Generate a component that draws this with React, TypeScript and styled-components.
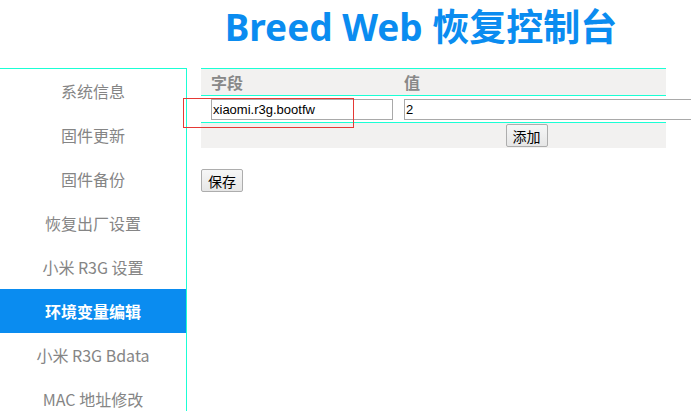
import { createGlobalStyle, styled } from "styled-components";

const GlobalStyle = createGlobalStyle`
  html, body {
    margin: 0;
    padding: 0;
    background: #fff;
  }
  body {
    font-family: "Noto Sans", "Noto Sans CJK SC", sans-serif;
  }
`;

const Page = styled.div`
  width: 691px;
  height: 411px;
  overflow: hidden;
  position: relative;
`;

const Header = styled.header`
  height: 68px;
  display: flex;
  justify-content: center;
  padding-left: 151px;
`;

const Title = styled.h1`
  margin: 0;
  padding-top: 4px;
  font-size: 37px;
  line-height: 46px;
  font-weight: 700;
  color: #0a8cf0;
  white-space: nowrap;
  font-family: "Noto Sans", "Noto Sans CJK SC", sans-serif;
`;

const Body = styled.div`
  display: flex;
  align-items: flex-start;
  gap: 14px;
`;

const Sidebar = styled.nav`
  width: 186px;
  flex-shrink: 0;
  border-top: 1px solid #1affd5;
  border-right: 1px solid #1affd5;
  height: 360px;
`;

const NavItem = styled.div<{ $active?: boolean }>`
  height: 44px;
  display: flex;
  align-items: center;
  justify-content: center;
  font-size: 16px;
  white-space: nowrap;
  font-family: "Noto Sans CJK SC", sans-serif;
  color: ${(p) => (p.$active ? "#fff" : "#858585")};
  font-weight: ${(p) => (p.$active ? 700 : 400)};
  background: ${(p) => (p.$active ? "#0a8cf0" : "transparent")};
`;

const Main = styled.main`
  width: 465px;
  flex-shrink: 0;
`;

const Table = styled.div`
  border-top: 1px solid #1affd5;
  background: #f2f1f0;
`;

const Row = styled.div<{ $plain?: boolean }>`
  display: grid;
  grid-template-columns: 193px 1fr;
  align-items: center;
  height: 26px;
  border-bottom: 1px solid #1affd5;
  background: ${(p) => (p.$plain ? "#fff" : "transparent")};
`;

const HeadCell = styled.div`
  padding-left: 10px;
  font-size: 16px;
  font-weight: 700;
  color: #888;
  font-family: "Noto Sans CJK SC", sans-serif;
`;

const Cell = styled.div<{ $center?: boolean }>`
  display: flex;
  justify-content: ${(p) => (p.$center ? "center" : "flex-start")};
  padding-left: ${(p) => (p.$center ? 0 : 10)}px;
`;

const ButtonRow = styled.div`
  display: grid;
  grid-template-columns: 186px 1fr;
  height: 25px;
  align-items: center;
`;

const Input = styled.input<{ $w: number }>`
  box-sizing: border-box;
  width: ${(p) => p.$w}px;
  height: 21px;
  margin: 0;
  border: 1px solid #a9a9a9;
  padding: 0 1px;
  font-size: 13px;
  font-family: "Liberation Sans", Arial, sans-serif;
  color: #000;
  background: #fff;
  outline: none;
`;

const Button = styled.button`
  box-sizing: border-box;
  width: 42px;
  height: 23px;
  padding: 0;
  border: 1px solid #adadad;
  border-radius: 2px;
  background: linear-gradient(#f6f6f6, #e6e6e6);
  font-size: 14px;
  color: #000;
  font-family: "Noto Sans CJK SC", sans-serif;
`;

const SaveArea = styled.div`
  padding-top: 21px;
`;

const Annotation = styled.div`
  position: absolute;
  left: 183px;
  top: 98px;
  width: 169px;
  height: 28px;
  border: 1px solid #e53935;
  pointer-events: none;
`;

const navItems = [
  "系统信息",
  "固件更新",
  "固件备份",
  "恢复出厂设置",
  "小米 R3G 设置",
  "环境变量编辑",
  "小米 R3G Bdata",
  "MAC 地址修改",
];

export default function App() {
  return (
    <Page>
      <GlobalStyle />
      <Header>
        <Title>Breed Web 恢复控制台</Title>
      </Header>
      <Body>
        <Sidebar>
          {navItems.map((item) => (
            <NavItem key={item} $active={item === "环境变量编辑"}>
              {item}
            </NavItem>
          ))}
        </Sidebar>
        <Main>
          <Table>
            <Row>
              <HeadCell>字段</HeadCell>
              <HeadCell>值</HeadCell>
            </Row>
            <Row $plain>
              <Cell>
                <Input $w={182} defaultValue="xiaomi.r3g.bootfw" />
              </Cell>
              <Cell>
                <Input $w={300} defaultValue="2" />
              </Cell>
            </Row>
            <ButtonRow>
              <span />
              <Cell $center>
                <Button>添加</Button>
              </Cell>
            </ButtonRow>
          </Table>
          <SaveArea>
            <Button>保存</Button>
          </SaveArea>
        </Main>
      </Body>
      <Annotation />
    </Page>
  );
}
